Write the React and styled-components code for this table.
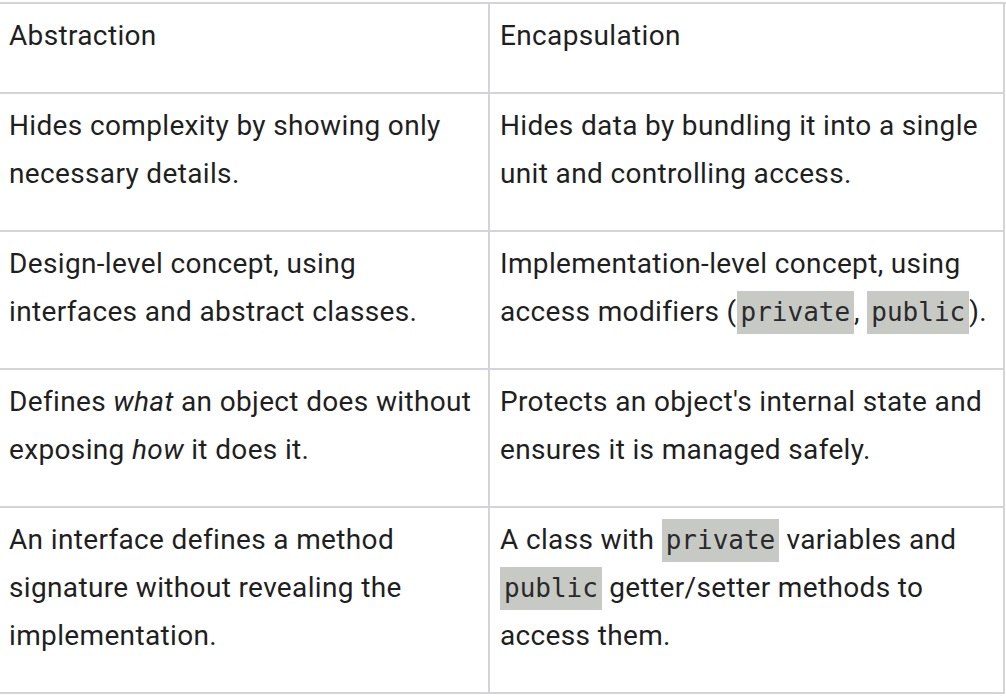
import { createGlobalStyle, styled } from "styled-components";

const GlobalStyle = createGlobalStyle`
  html, body {
    margin: 0;
    padding: 0;
    background: #ffffff;
    overflow: hidden;
  }
  body {
    font-family: Roboto, "Liberation Sans", sans-serif;
    color: #1f1f1f;
  }
`;

const rows = [
  [<>Abstraction</>, <>Encapsulation</>],
  [
    <>Hides complexity by showing only necessary details.</>,
    <>Hides data by bundling it into a single unit and controlling access.</>,
  ],
  [
    <>Design-level concept, using interfaces and abstract classes.</>,
    <>
      Implementation-level concept, using access modifiers (<Code>private</Code>,{" "}
      <Code>public</Code>).
    </>,
  ],
  [
    <>
      Defines <em>what</em> an object does without exposing <em>how</em> it does it.
    </>,
    <>Protects an object's internal state and ensures it is managed safely.</>,
  ],
  [
    <>An interface defines a method signature without revealing the implementation.</>,
    <>
      A class with <Code>private</Code> variables and <Code>public</Code> getter/setter
      methods to access them.
    </>,
  ],
];

const App = () => {
  return (
    <>
      <GlobalStyle />
      <Table>
        {rows.map((row, i) =>
          row.map((cell, j) => <Cell key={i + "-" + j}>{cell}</Cell>)
        )}
      </Table>
    </>
  );
};
export default App;

function Code({ children }) {
  return <Mono>{children}</Mono>;
}

const Table = styled.div`
  display: grid;
  grid-template-columns: 491px 515px;
  margin-left: -3px;
  margin-top: 2px;
  border-top: 2px solid #d3d3d9;
  border-left: 2px solid #d3d3d9;
`;

const Cell = styled.div`
  border-right: 2px solid #d3d3d9;
  border-bottom: 2px solid #d3d3d9;
  padding: 8px 8px 32px 10px;
  font-size: 28px;
  letter-spacing: 0.35px;
  line-height: 48px;
  em {
    font-style: italic;
  }
`;

const Mono = styled.code`
  font-family: "DejaVu Sans Mono", monospace;
  font-size: 26px;
  letter-spacing: 0;
  background: #c7c9c5;
  color: #2a2a2a;
  padding: 6px 4px 7px;
`;
